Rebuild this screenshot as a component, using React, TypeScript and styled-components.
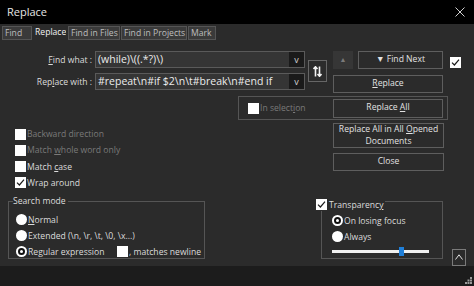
import React from "react";
import styled, { createGlobalStyle, css } from "styled-components";

const Global = createGlobalStyle`
  html, body { margin: 0; padding: 0; background: #2b2b2b; overflow: hidden; }
  * { box-sizing: border-box; }
`;

const Window = styled.div`
  width: 474px;
  height: 286px;
  display: flex;
  flex-direction: column;
  background: #2b2b2b;
  color: #dcdcdc;
  font-family: "Open Sans", "Noto Sans", sans-serif;
  font-size: 8.6px;
  line-height: 12px;
`;

const TitleBar = styled.div`
  height: 24px;
  flex-shrink: 0;
  background: #000;
  display: flex;
  align-items: center;
  justify-content: space-between;
  padding: 0 9px 0 7px;
`;

const Title = styled.span`
  font-size: 11px;
  color: #e6e6e6;
`;

const TabBar = styled.div`
  height: 16px;
  flex-shrink: 0;
  display: flex;
  align-items: flex-end;
  gap: 1px;
  padding-left: 2px;
`;

const Tab = styled.div<{ $w: number; $active?: boolean }>`
  width: ${(p) => p.$w}px;
  height: 14px;
  padding: 0 2px;
  border: 1px solid #555;
  background: #3a3a3a;
  color: #bfbfbf;
  display: flex;
  align-items: center;
  white-space: nowrap;
  overflow: hidden;
  ${(p) =>
    p.$active &&
    css`
      height: 16px;
      padding: 0 0 0 1px;
      border-color: transparent;
      background: #2b2b2b;
      color: #f2f2f2;
    `}
`;

const Body = styled.div`
  flex: 1;
  display: flex;
  flex-direction: column;
`;

const TopSection = styled.div`
  margin-top: 11px;
  display: flex;
  align-items: flex-start;
`;

const Fields = styled.div`
  display: grid;
  grid-template-columns: 92px 210px;
  grid-auto-rows: 17px;
  column-gap: 3px;
  row-gap: 5px;
`;

const FieldLabel = styled.span`
  text-align: right;
  align-self: center;
  white-space: nowrap;
`;

const Combo = styled.div`
  display: flex;
  border: 1px solid #5a5a5a;
  background: #353535;
`;

const ComboText = styled.span`
  flex: 1;
  padding-left: 2px;
  font-size: 10.5px;
  line-height: 15px;
  color: #ececec;
  white-space: nowrap;
  overflow: hidden;
`;

const ComboArrow = styled.span`
  width: 15px;
  background: #1a1a1a;
  color: #cfcfcf;
  display: flex;
  align-items: center;
  justify-content: center;
  font-size: 9px;
`;

const SwapButton = styled.div`
  margin: 9px 0 0 3px;
  width: 19px;
  height: 22px;
  border: 1px solid #666;
  display: flex;
  align-items: center;
  justify-content: center;
`;

const RightCluster = styled.div`
  margin-left: 6px;
  display: flex;
  flex-direction: column;
  gap: 5px;
`;

const ButtonRow = styled.div`
  display: flex;
  align-items: flex-start;
`;

const Button = styled.div<{ $w: number; $h?: number }>`
  width: ${(p) => p.$w}px;
  height: ${(p) => p.$h ?? 18}px;
  border: 1px solid #5e5e5e;
  background: #2b2b2b;
  color: #e2e2e2;
  display: flex;
  align-items: center;
  justify-content: center;
  text-align: center;
  line-height: 11.5px;
  white-space: pre-line;
`;

const UpButton = styled.div`
  width: 20px;
  height: 18px;
  margin-right: 5px;
  background: #363636;
  color: #7a7a7a;
  font-size: 7px;
  display: flex;
  align-items: center;
  justify-content: center;
`;

const Box = styled.span`
  width: 11px;
  height: 11px;
  flex-shrink: 0;
  background: #fff;
  display: inline-flex;
  align-items: center;
  justify-content: center;
`;

const TopCheck = styled.div`
  margin: 6px 0 0 7px;
`;

const SelectionFrame = styled.div`
  margin: 3px 0 0 238px;
  width: 210px;
  height: 24px;
  border: 1px solid #555;
  display: flex;
  align-items: center;
  padding: 0 4px 0 9px;
`;

const CheckRow = styled.label<{ $disabled?: boolean }>`
  display: flex;
  align-items: center;
  gap: 1px;
  height: 12px;
  white-space: nowrap;
  color: ${(p) => (p.$disabled ? "#7a7a7a" : "#dcdcdc")};
`;

const Push = styled.div`
  margin-left: auto;
`;

const MiddleRow = styled.div`
  margin-top: 3px;
  display: grid;
  grid-template-columns: 333px 111px;
`;

const Options = styled.div`
  margin-top: 5px;
  padding-left: 15px;
  display: flex;
  flex-direction: column;
  gap: 4.3px;
`;

const SideButtons = styled.div`
  display: flex;
  flex-direction: column;
  gap: 5px;
`;

const BottomRow = styled.div`
  margin-top: 12px;
  display: flex;
  align-items: flex-start;
`;

const Frame = styled.div<{ $left: number; $w: number; $pt: number; $pl: number }>`
  position: relative;
  margin-left: ${(p) => p.$left}px;
  width: ${(p) => p.$w}px;
  height: 58px;
  border: 1px solid #555;
  padding: ${(p) => p.$pt}px 0 0 ${(p) => p.$pl}px;
  display: flex;
  flex-direction: column;
  gap: 4px;
`;

const Legend = styled.div<{ $top: number; $left: number }>`
  position: absolute;
  top: ${(p) => p.$top}px;
  left: ${(p) => p.$left}px;
  display: flex;
  align-items: center;
  gap: 2px;
  padding-right: 2px;
  background: #2b2b2b;
  white-space: nowrap;
`;

const RadioRow = styled.div`
  display: flex;
  align-items: center;
  gap: 1px;
  height: 12px;
  white-space: nowrap;
`;

const Radio = styled.span<{ $on?: boolean }>`
  position: relative;
  width: 11px;
  height: 11px;
  border-radius: 50%;
  background: #fff;
  flex-shrink: 0;
  ${(p) =>
    p.$on &&
    css`
      &::after {
        content: "";
        position: absolute;
        inset: 2px;
        border: 2px solid #111;
        border-radius: 50%;
        background: #fff;
      }
    `}
`;

const RegexText = styled.span`
  width: 88px;
`;

const Slider = styled.div`
  position: relative;
  width: 97px;
  height: 9px;
  display: flex;
  align-items: center;
`;

const Track = styled.div`
  width: 100%;
  height: 3px;
  background: #f0f0f0;
`;

const Thumb = styled.div`
  position: absolute;
  top: 0;
  width: 5px;
  height: 9px;
  background: #1f7fd9;
`;

const CollapseButton = styled.div`
  margin: 48px 0 0 9px;
  width: 14px;
  height: 17px;
  border: 1px solid #7a7a7a;
  display: flex;
  align-items: center;
  justify-content: center;
`;

const Footer = styled.div`
  height: 20px;
  flex-shrink: 0;
  background: #1c1c1c;
  display: flex;
  justify-content: flex-end;
  align-items: flex-end;
  padding: 0 2px 2px 0;
`;

const U = styled.span`
  text-decoration: underline;
  text-underline-offset: 1px;
`;

const Check = ({ checked }: { checked?: boolean }) => (
  <Box>
    {checked && (
      <svg width="9" height="9" viewBox="0 0 9 9">
        <path d="M1 4.6 L3.4 7 L8 1.6" fill="none" stroke="#1a1a1a" strokeWidth="1.2" />
      </svg>
    )}
  </Box>
);

export default function App() {
  const thumbLeft = 67;
  return (
    <>
      <Global />
      <Window>
        <TitleBar>
          <Title>Replace</Title>
          <svg width="10" height="10" viewBox="0 0 10 10">
            <path d="M0.5 0.5 L9.5 9.5 M9.5 0.5 L0.5 9.5" stroke="#d0d0d0" strokeWidth="1" />
          </svg>
        </TitleBar>
        <TabBar>
          <Tab $w={30}>Find</Tab>
          <Tab $w={34} $active>
            Replace
          </Tab>
          <Tab $w={52}>Find in Files</Tab>
          <Tab $w={66}>Find in Projects</Tab>
          <Tab $w={28}>Mark</Tab>
        </TabBar>
        <Body>
          <TopSection>
            <Fields>
              <FieldLabel>
                <U>F</U>ind what :
              </FieldLabel>
              <Combo>
                <ComboText>(while)\((.*?)\)</ComboText>
                <ComboArrow>v</ComboArrow>
              </Combo>
              <FieldLabel>
                Rep<U>l</U>ace with :
              </FieldLabel>
              <Combo>
                <ComboText>#repeat\n#if $2\n\t#break\n#end if</ComboText>
                <ComboArrow>v</ComboArrow>
              </Combo>
            </Fields>
            <SwapButton>
              <svg width="9" height="11" viewBox="0 0 9 11">
                <path d="M2.5 10.5 V1 M0.5 3 L2.5 0.8 L4.5 3" fill="none" stroke="#f2f2f2" strokeWidth="1.6" />
                <path d="M6.5 0.5 V10 M4.5 8 L6.5 10.2 L8.5 8" fill="none" stroke="#f2f2f2" strokeWidth="1.6" />
              </svg>
            </SwapButton>
            <RightCluster>
              <ButtonRow>
                <UpButton>▲</UpButton>
                <Button $w={85}>▼ Find Next</Button>
                <TopCheck>
                  <Check checked />
                </TopCheck>
              </ButtonRow>
              <Button $w={110}>
                <span>
                  <U>R</U>eplace
                </span>
              </Button>
            </RightCluster>
          </TopSection>
          <SelectionFrame>
            <CheckRow $disabled>
              <Check />
              <span>
                In select<U>i</U>on
              </span>
            </CheckRow>
            <Push>
              <Button $w={110} $h={19}>
                <span>
                  Replace <U>A</U>ll
                </span>
              </Button>
            </Push>
          </SelectionFrame>
          <MiddleRow>
            <Options>
              <CheckRow $disabled>
                <Check />
                <span>Backward direction</span>
              </CheckRow>
              <CheckRow $disabled>
                <Check />
                <span>
                  Match <U>w</U>hole word only
                </span>
              </CheckRow>
              <CheckRow>
                <Check />
                <span>
                  Match <U>c</U>ase
                </span>
              </CheckRow>
              <CheckRow>
                <Check checked />
                <span>Wrap around</span>
              </CheckRow>
            </Options>
            <SideButtons>
              <Button $w={111} $h={25}>
                <span>
                  Replace All in All <U>O</U>pened{"\n"}Documents
                </span>
              </Button>
              <Button $w={111}>Close</Button>
            </SideButtons>
          </MiddleRow>
          <BottomRow>
            <Frame $left={8} $w={197} $pt={12} $pl={7}>
              <Legend $top={-7} $left={4}>
                <span>Search mode</span>
              </Legend>
              <RadioRow>
                <Radio />
                <span>
                  <U>N</U>ormal
                </span>
              </RadioRow>
              <RadioRow>
                <Radio />
                <span>Extended (\n, \r, \t, \0, \x...)</span>
              </RadioRow>
              <RadioRow>
                <Radio $on />
                <RegexText>Regular expression</RegexText>
                <Check />
                <span>, matches newline</span>
              </RadioRow>
            </Frame>
            <Frame $left={116} $w={122} $pt={13} $pl={10}>
              <Legend $top={-3} $left={-6}>
                <Check checked />
                <span>
                  Transparenc<U>y</U>
                </span>
              </Legend>
              <RadioRow>
                <Radio $on />
                <span>On losing focus</span>
              </RadioRow>
              <RadioRow>
                <Radio />
                <span>Always</span>
              </RadioRow>
              <Slider>
                <Track />
                <Thumb style={{ left: thumbLeft }} />
              </Slider>
            </Frame>
            <CollapseButton>
              <svg width="8" height="6" viewBox="0 0 8 6">
                <path d="M0.5 5.5 L4 0.8 L7.5 5.5" fill="none" stroke="#e0e0e0" strokeWidth="1" />
              </svg>
            </CollapseButton>
          </BottomRow>
        </Body>
        <Footer>
          <svg width="7" height="7" viewBox="0 0 7 7">
            <g fill="#9a9a9a">
              <rect x="5" y="0" width="2" height="2" />
              <rect x="2.5" y="2.5" width="2" height="2" />
              <rect x="5" y="2.5" width="2" height="2" />
              <rect x="0" y="5" width="2" height="2" />
              <rect x="2.5" y="5" width="2" height="2" />
              <rect x="5" y="5" width="2" height="2" />
            </g>
          </svg>
        </Footer>
      </Window>
    </>
  );
}
